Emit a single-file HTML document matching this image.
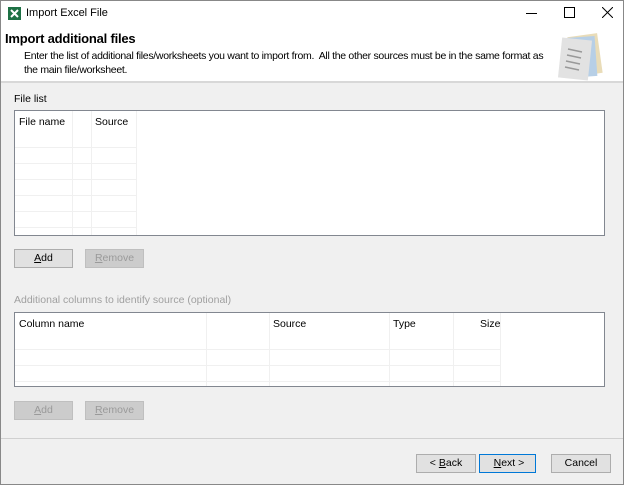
<html><head><style>
body{margin:0;width:624px;height:485px;overflow:hidden;font-family:"Liberation Sans",sans-serif;font-size:10.5px;color:#000}
.win{position:absolute;left:0;top:0;width:622px;height:483px;border:1px solid #888;background:#f0f0f0}
.a{position:absolute}
.btn{position:absolute;height:17px;border:1px solid #adadad;background:#e1e1e1;text-align:center;line-height:17px;font-size:10.5px}
.dis{background:#cccccc;border-color:#bfbfbf;color:#9a9a9a}
.tbl{position:absolute;background:#fff;border:1px solid #828790}
.col{position:absolute;top:0;border-right:1px solid #f0f0f0}
.hd{position:absolute;top:0;left:0;background:#fff;line-height:20px}
.rl{position:absolute;left:0;height:1px;background:#f0f0f0}
</style></head><body><div class="win">
<div class="a" style="left:0;top:0;width:622px;height:80px;background:#fff"></div>
<div class="a" style="left:0;top:80px;width:622px;height:2px;background:#d8d8d8"></div>
<svg class="a" style="left:7px;top:6px" width="13" height="13"><rect width="13" height="13" fill="#1e7145"/><path d="M3 3L10 10M10 3L3 10" stroke="#fff" stroke-width="2"/></svg>
<div class="a" style="left:25px;top:6px;font-size:11px">Import Excel File</div>
<div class="a" style="left:525px;top:12px;width:11px;height:1px;background:#000"></div>
<div class="a" style="left:563px;top:6px;width:9px;height:9px;border:1px solid #000"></div>
<svg class="a" style="left:601px;top:6px" width="11" height="11"><path d="M0 0L11 11M11 0L0 11" stroke="#000" stroke-width="1"/></svg>
<div class="a" style="left:4px;top:30px;font-size:13px;font-weight:bold;letter-spacing:-0.2px">Import additional files</div>
<div class="a" style="left:23px;top:48px;line-height:14px;letter-spacing:-0.3px;white-space:nowrap">Enter the list of additional files/worksheets you want to import from.&nbsp; All the other sources must be in the same format as<br>the main file/worksheet.</div>
<svg class="a" style="left:555px;top:30px" width="55" height="50"><rect x="14" y="4" width="30" height="40" fill="#e9dcb8" transform="rotate(-8 29 24)"/><rect x="10" y="6" width="30" height="40" fill="#b7cfe6" transform="rotate(-4 25 26)"/><rect x="4" y="8" width="30" height="40" fill="#e2e2e2" transform="rotate(6 19 28)"/><path d="M12 18L26 21M11 24L25 27M10 30L24 33M9 36L23 39" stroke="#999" stroke-width="1.5"/></svg>
<div class="a" style="left:13px;top:92px">File list</div>
<div class="tbl" style="left:13px;top:109px;width:589px;height:124px">
 <div class="hd" style="width:121px;height:20px"></div>
 <div class="col" style="left:0;width:57px;height:124px"></div>
 <div class="col" style="left:58px;width:18px;height:124px"></div>
 <div class="col" style="left:77px;width:44px;height:124px"></div>
 <div class="a" style="left:4px;top:5px">File name</div><div class="a" style="left:80px;top:5px">Source</div>
 <div class="rl" style="top:36px;width:122px"></div><div class="rl" style="top:52px;width:122px"></div><div class="rl" style="top:68px;width:122px"></div><div class="rl" style="top:84px;width:122px"></div><div class="rl" style="top:100px;width:122px"></div><div class="rl" style="top:116px;width:122px"></div>
</div>
<div class="btn" style="left:13px;top:248px;width:57px"><u>A</u>dd</div>
<div class="btn dis" style="left:84px;top:248px;width:57px"><u>R</u>emove</div>
<div class="a" style="left:13px;top:293px;color:#a0a0a0">Additional columns to identify source (optional)</div>
<div class="tbl" style="left:13px;top:311px;width:589px;height:73px">
 <div class="col" style="left:0;width:191px;height:73px"></div>
 <div class="col" style="left:192px;width:62px;height:73px"></div>
 <div class="col" style="left:255px;width:119px;height:73px"></div>
 <div class="col" style="left:375px;width:63px;height:73px"></div>
 <div class="col" style="left:439px;width:46px;height:73px"></div>
 <div class="a" style="left:4px;top:5px">Column name</div><div class="a" style="left:258px;top:5px">Source</div><div class="a" style="left:378px;top:5px">Type</div><div class="a" style="left:465px;top:5px">Size</div>
 <div class="rl" style="top:36px;width:486px"></div><div class="rl" style="top:52px;width:486px"></div><div class="rl" style="top:68px;width:486px"></div>
</div>
<div class="btn dis" style="left:13px;top:400px;width:57px"><u>A</u>dd</div>
<div class="btn dis" style="left:84px;top:400px;width:57px"><u>R</u>emove</div>
<div class="a" style="left:0;top:437px;width:622px;height:1px;background:#d0d0d0"></div>
<div class="btn" style="left:415px;top:453px;width:58px">&lt; <u>B</u>ack</div>
<div class="btn" style="left:478px;top:453px;width:55px;border-color:#0078d7">&nbsp;<u>N</u>ext &gt;</div>
<div class="btn" style="left:550px;top:453px;width:58px">Cancel</div>
</div></body></html>
